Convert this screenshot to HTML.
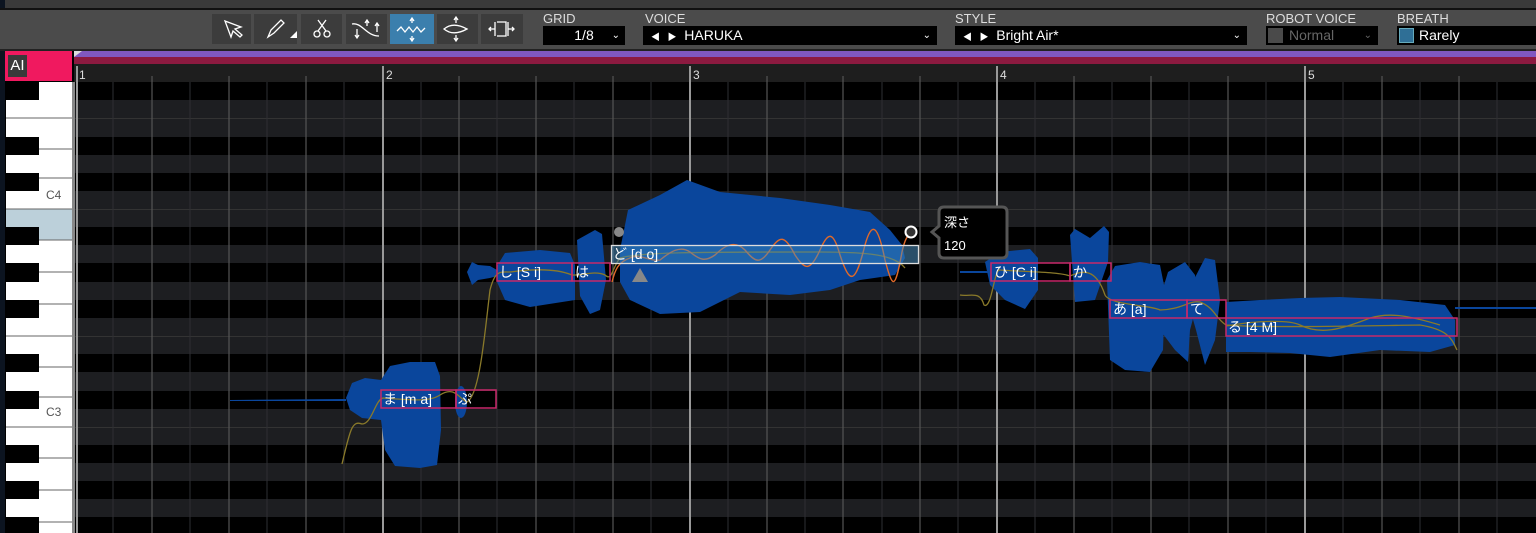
<!DOCTYPE html>
<html><head><meta charset="utf-8"><style>
*{margin:0;padding:0;box-sizing:border-box}
body{width:1536px;height:533px;overflow:hidden;background:#000;font-family:"Liberation Sans","Noto Sans CJK JP",sans-serif;position:relative}
.a{position:absolute}
.lbl{color:#ddd;font-size:13px}
.dd{background:#000;color:#fff;font-size:14px;height:19px;line-height:19px;position:absolute}
.btn{position:absolute;top:14px;height:30px;background:#3c3c3c}
</style></head><body>
<div class="a" style="left:0;top:0;width:1536px;height:8px;background:#3a3a3a"></div>
<div class="a" style="left:0;top:0;width:5px;height:533px;background:#0c1420"></div>
<div class="a" style="left:0;top:8px;width:1536px;height:41px;background:#4b4b4b"></div>
<div class="a" style="left:0;top:8px;width:1536px;height:2px;background:#111"></div>
<div class="btn" style="left:212px;width:39px"></div>
<div class="btn" style="left:254px;width:43px"></div>
<div class="btn" style="left:301px;width:41px"></div>
<div class="btn" style="left:346px;width:41px"></div>
<div class="btn" style="left:390px;width:44px;background:#3b7fad"></div>
<div class="btn" style="left:437px;width:41px"></div>
<div class="btn" style="left:481px;width:42px"></div>
<svg class="a" style="left:0;top:0" width="540" height="50" fill="none" stroke="#fff" stroke-width="1.3">
<path d="M225 21 L231 37 L233 31 L240 37 L242 35 L235 29 L241 27 Z"/>
<path d="M268 37 L271 30 L281 20 L284 23 L274 33 Z M268 37 L274 33"/>
<path d="M290 38 L297 38 L297 31 Z" fill="#fff" stroke="none"/>
<circle cx="317" cy="34" r="3"/><circle cx="327" cy="34" r="3"/><path d="M318 31 L326 20 M326 31 L318 20"/>
<path d="M352 24 C362 22 366 36 379 36 M357 29 v8 M355 35 l2 3 2-3 M377 24 v8 M375 26 l2-3 2 3 M367 21 v5 M365 23 l2-3 2 3"/>
<path d="M397 31 l4-4 4 5 4-5 4 5 4-5 4 5 4-4 M412 19 v4 M410 21 l2-3 2 3 M412 36 v4 M410 38 l2 3 2-3"/>
<path d="M444 29 C450 24 458 24 467 29 C458 34 450 34 444 29 Z M456 18 v5 M454 20 l2-3 2 3 M456 35 v5 M454 38 l2 3 2-3"/>
<path d="M489 29 h6 M491 27 l-2 2 2 2 M495 22 v14 M497 22 h9 v14 h-9 M508 22 v14 M508 29 h6 M512 27 l2 2-2 2"/>
</svg>
<div class="a lbl" style="left:543px;top:11px">GRID</div>
<div class="dd" style="left:543px;top:26px;width:82px;text-align:center">1/8<span style="position:absolute;right:5px;font-size:10px">⌄</span></div>
<div class="a lbl" style="left:645px;top:11px">VOICE</div>
<div class="dd" style="left:643px;top:26px;width:294px;padding-left:8px"><span style="font-size:9px">◀&nbsp;&nbsp;&nbsp;▶</span>&nbsp;&nbsp;HARUKA<span style="position:absolute;right:6px;font-size:10px">⌄</span></div>
<div class="a lbl" style="left:955px;top:11px">STYLE</div>
<div class="dd" style="left:955px;top:26px;width:292px;padding-left:8px"><span style="font-size:9px">◀&nbsp;&nbsp;&nbsp;▶</span>&nbsp;&nbsp;Bright Air*<span style="position:absolute;right:6px;font-size:10px">⌄</span></div>
<div class="a lbl" style="left:1266px;top:11px">ROBOT VOICE</div>
<div class="dd" style="left:1266px;top:26px;width:112px;color:#666;padding-left:23px">Normal<span style="position:absolute;right:6px;font-size:10px">⌄</span><span style="position:absolute;left:2px;top:2px;width:15px;height:15px;background:#4a4a4a"></span></div>
<div class="a lbl" style="left:1397px;top:11px">BREATH</div>
<div class="dd" style="left:1397px;top:26px;width:139px;padding-left:22px">Rarely<span style="position:absolute;left:2px;top:2px;width:15px;height:15px;background:#2f6f96;border:1px solid #6ab"></span></div>
<div class="a" style="left:0;top:49px;width:1536px;height:2px;background:#222"></div>
<div class="a" style="left:5px;top:51px;width:67px;height:30px;background:#f0195f"></div>
<div class="a" style="left:8px;top:55px;width:19px;height:22px;background:#3a3a3a;color:#fff;font-size:15px;line-height:22px;text-align:center">AI</div>
<div class="a" style="left:74px;top:51px;width:1462px;height:6px;background:#8058c0"></div>
<div class="a" style="left:74px;top:57px;width:1462px;height:7px;background:#8c1a40"></div>
<div class="a" style="left:74px;top:64px;width:1462px;height:18px;background:#1e1e1e"></div>
<svg class="a" style="left:0;top:0" width="1536" height="533">
<polygon points="74,51 82,51 74,57" fill="#ddd"/>
<g>
<rect x="74" y="82" width="1462" height="451" fill="#1d1e21"/>
<g fill="#000">
<rect x="74" y="82" width="1462" height="18"/>
<rect x="74" y="137" width="1462" height="18"/>
<rect x="74" y="173" width="1462" height="18"/>
<rect x="74" y="227" width="1462" height="18"/>
<rect x="74" y="263" width="1462" height="19"/>
<rect x="74" y="300" width="1462" height="18"/>
<rect x="74" y="354" width="1462" height="18"/>
<rect x="74" y="391" width="1462" height="18"/>
<rect x="74" y="445" width="1462" height="18"/>
<rect x="74" y="481" width="1462" height="18"/>
<rect x="74" y="517" width="1462" height="18"/>
</g>
<g stroke="#333" stroke-width="1"><line x1="74" x2="1536" y1="118.5" y2="118.5"/><line x1="74" x2="1536" y1="209.5" y2="209.5"/><line x1="74" x2="1536" y1="336.5" y2="336.5"/><line x1="74" x2="1536" y1="427.5" y2="427.5"/></g>
</g>
<g stroke="#2e2f33" stroke-width="1">
<path d="M113 82V533M190 82V533M267 82V533M344 82V533M421 82V533M497 82V533M574 82V533M651 82V533M728 82V533M805 82V533M882 82V533M958 82V533M1035 82V533M1112 82V533M1189 82V533M1266 82V533M1343 82V533M1420 82V533M1497 82V533"/>
</g>
<g stroke="#555" stroke-width="1.2">
<path d="M152 76V533M229 76V533M306 76V533M459 76V533M536 76V533M613 76V533M767 76V533M843 76V533M920 76V533M1074 76V533M1151 76V533M1228 76V533M1382 76V533M1459 76V533"/>
</g>
<g stroke="#999" stroke-width="2">
<path d="M77 66V533M383 66V533M690 66V533M997 66V533M1305 66V533"/>
</g>
<g fill="#ddd" font-size="12" font-family="Liberation Sans"><text x="79" y="79">1</text><text x="386" y="79">2</text><text x="693" y="79">3</text><text x="1000" y="79">4</text><text x="1308" y="79">5</text></g>
<rect x="6" y="82" width="66" height="451" fill="#fff"/>
<rect x="6" y="209" width="66" height="31" fill="#bcd0da"/>
<g stroke="#666" stroke-width="1"><path d="M6 118H72M6 149H72M6 178H72M6 209H72M6 240H72M6 272H72M6 304H72M6 336H72M6 367H72M6 397H72M6 427H72M6 458H72M6 490H72M6 522H72"/></g>
<g fill="#000">
<rect x="6" y="82" width="33" height="18"/><rect x="6" y="137" width="33" height="18"/><rect x="6" y="173" width="33" height="18"/><rect x="6" y="227" width="33" height="18"/><rect x="6" y="263" width="33" height="19"/><rect x="6" y="300" width="33" height="18"/><rect x="6" y="354" width="33" height="18"/><rect x="6" y="391" width="33" height="18"/><rect x="6" y="445" width="33" height="18"/><rect x="6" y="481" width="33" height="18"/><rect x="6" y="517" width="33" height="18"/>
</g>
<rect x="72" y="82" width="3" height="451" fill="#888"/>
<g fill="#555" font-size="12" font-family="Liberation Sans"><text x="46" y="199">C4</text><text x="46" y="416">C3</text></g>
<g fill="#0a469c">
<path d="M230 400 L346 399 L346 401 L230 401Z"/>
<polygon points="346,398 352,383 365,378 381,380 390,366 410,362 435,362 440,376 441,430 437,465 420,468 395,466 385,450 381,420 362,418 350,410"/>
<ellipse cx="461" cy="402" rx="6" ry="16"/>
<polygon points="467,272 472,262 478,265 490,266 497,270 497,276 490,278 478,280 472,285"/>
<polygon points="497,266 505,253 540,250 570,253 575,265 575,300 530,307 505,300 497,282"/>
<polygon points="577,240 595,230 602,234 606,280 600,310 590,314 580,296"/>
<polygon points="620,250 628,210 660,195 687,180 720,192 780,198 830,205 870,212 890,230 902,245 905,258 895,275 860,280 830,290 790,295 740,292 700,312 660,314 630,300 620,282"/>
<path d="M960 271 H990 V273 H960Z"/>
<polygon points="985,262 1000,252 1030,249 1038,258 1038,290 1025,309 1005,300 990,285"/>
<polygon points="1070,235 1075,229 1090,238 1104,226 1109,232 1108,262 1095,300 1075,302"/>
<polygon points="1107,280 1115,266 1140,262 1160,265 1165,290 1163,350 1150,372 1125,370 1110,360"/>
<polygon points="1158,305 1168,272 1185,262 1195,275 1198,300 1190,330 1188,362 1175,350 1160,330"/>
<polygon points="1186,295 1205,258 1215,260 1220,300 1215,340 1205,365 1196,330"/>
<polygon points="1226,302 1260,300 1300,298 1340,297 1400,300 1445,305 1455,320 1455,345 1430,352 1380,350 1330,357 1290,353 1250,352 1226,352"/>
<path d="M1455 307 H1536 V309 H1455Z"/>
</g>
<g fill="none" stroke="#8a7a2a" stroke-width="1.3">
<path d="M342 464 C350 430 352 420 362 424 C372 424 375 400 383 398 C410 400 430 402 440 395 C455 385 460 400 467 402 C480 395 485 330 490 290 C495 270 500 272 510 272 C540 268 560 270 572 275 C580 276 595 270 605 275 C612 282 612 268 620 258 C640 252 700 252 820 252 C870 252 895 255 905 268"/>
<path d="M960 295 C970 297 980 290 984 305 C992 310 994 268 1000 270 C1030 272 1060 272 1070 276 C1080 272 1095 265 1105 295 C1110 305 1150 305 1160 310 C1180 310 1190 300 1200 302 C1215 308 1215 318 1226 325 C1260 328 1350 326 1420 325 C1450 330 1452 340 1457 350"/>
<path d="M1226 326 C1260 320 1290 320 1300 325 C1320 335 1340 330 1370 318 C1390 312 1410 316 1440 325"/>
</g>
<path d="M612 282 C615 270 618 262 630 258 C640 253 650 262 660 260 C670 252 680 245 690 252 C700 260 705 262 715 255 C725 245 735 240 745 250 C755 262 760 265 770 250 C780 235 785 235 795 255 C805 270 810 272 820 250 C828 232 833 230 840 255 C850 285 855 285 865 245 C872 220 878 225 885 260 C893 290 895 290 902 252 C905 238 908 235 912 232" fill="none" stroke="#e06a2a" stroke-width="1.4"/>
<g fill="none" stroke="#c8286a" stroke-width="1.5">
<rect x="381" y="390" width="75" height="18"/><rect x="456" y="390" width="40" height="18"/>
<rect x="497" y="263" width="75" height="18"/><rect x="572" y="263" width="38" height="18"/>
<rect x="991" y="263" width="79" height="18"/><rect x="1070" y="263" width="41" height="18"/>
<rect x="1110" y="300" width="77" height="18"/><rect x="1187" y="300" width="39" height="18"/>
<rect x="1226" y="318" width="231" height="18"/>
</g>
<rect x="611.5" y="245.5" width="307" height="18" fill="#3c8cc0" fill-opacity="0.45" stroke="#ddd" stroke-width="1.3"/>
<g fill="#fff" font-size="14" font-family="Liberation Sans, Noto Sans CJK JP, sans-serif">
<text x="383" y="404">ま [m a]</text><text x="458" y="404">ぷ</text>
<text x="499" y="277">し [S i]</text><text x="575" y="277">は</text>
<text x="613" y="259">ど [d o]</text>
<text x="994" y="277">ひ [C i]</text><text x="1073" y="277">か</text>
<text x="1113" y="314">あ [a]</text><text x="1190" y="314">て</text>
<text x="1228" y="332">る [4 M]</text>
</g>
<circle cx="619" cy="232" r="5" fill="#888"/>
<polygon points="640,268 632,282 648,282" fill="#888"/>
<circle cx="911" cy="232" r="5.5" fill="#333" stroke="#fff" stroke-width="2"/>
<path d="M944 207 H1002 Q1007 207 1007 212 V253 Q1007 258 1002 258 H944 Q939 258 939 253 V238 L932 232 L939 226 V212 Q939 207 944 207Z" fill="#000" stroke="#555" stroke-width="3"/>
<g fill="#fff" font-size="13" font-family="Liberation Sans, Noto Sans CJK JP, sans-serif"><text x="944" y="227">深さ</text><text x="944" y="250">120</text></g>
</svg>
</body></html>
